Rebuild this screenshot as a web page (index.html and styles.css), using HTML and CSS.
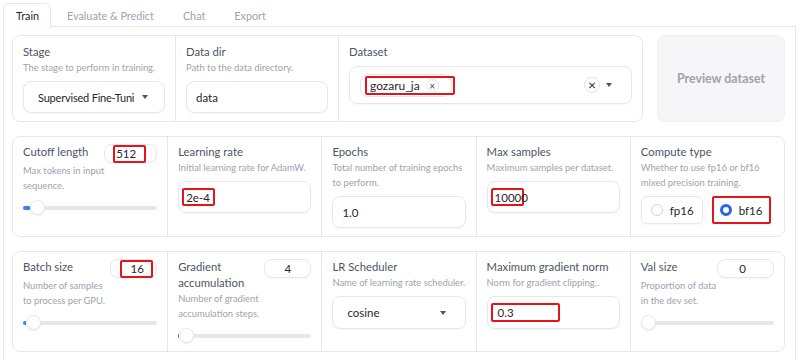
FILE: index.html
```html
<!DOCTYPE html>
<html lang="en">
<head>
	<meta charset="UTF-8">
	<title>Train</title>
	<link rel="stylesheet" href="styles.css">
</head>
<body>
	<div class="tabs">
		<div class="tab active">Train</div>
		<div class="tab">Evaluate &amp; Predict</div>
		<div class="tab">Chat</div>
		<div class="tab">Export</div>
	</div>

	<div class="panel">
		<!-- 数据 -->
		<div class="row-top">
			<div class="box box-data">
				<div class="cell">
					<div class="label">Stage</div>
					<div class="info">The stage to perform in training.</div>
					<div class="field select"><span class="value tight">Supervised Fine-Tuni</span><i class="caret"></i></div>
				</div>
				<div class="cell">
					<div class="label">Data dir</div>
					<div class="info">Path to the data directory.</div>
					<div class="field">data</div>
				</div>
				<div class="cell">
					<div class="label">Dataset</div>
					<div class="field multi">
						<span class="chip">
							<span class="mark mark-chip">gozaru_ja <i class="x small">&times;</i></span>
						</span>
						<span class="multi-end"><i class="x">&times;</i><i class="caret"></i></span>
					</div>
				</div>
			</div>
			<button class="preview">Preview dataset</button>
		</div>

		<!-- 训练参数 -->
		<div class="box grid5">
			<div class="cell">
				<div class="head">
					<div class="label">Cutoff length</div>
					<div class="num num-wide"><span class="mark mark-num">512</span></div>
				</div>
				<div class="info">Max tokens in input<br>sequence.</div>
				<div class="slider"><i class="fill" style="width: 7px"></i><i class="thumb"></i><i class="rest"></i></div>
			</div>
			<div class="cell">
				<div class="label">Learning rate</div>
				<div class="info">Initial learning rate for AdamW.</div>
				<div class="field field-marked"><span class="mark mark-val">2e-4</span></div>
			</div>
			<div class="cell">
				<div class="label">Epochs</div>
				<div class="info">Total number of training epochs<br>to perform.</div>
				<div class="field">1.0</div>
			</div>
			<div class="cell">
				<div class="label">Max samples</div>
				<div class="info">Maximum samples per dataset.</div>
				<div class="field field-marked"><span class="mark mark-val">10000</span></div>
			</div>
			<div class="cell">
				<div class="label">Compute type</div>
				<div class="info">Whether to use fp16 or bf16<br>mixed precision training.</div>
				<div class="radios">
					<label class="radio"><i class="dot"></i>fp16</label>
					<label class="radio checked"><i class="dot"></i>bf16</label>
				</div>
			</div>
		</div>

		<div class="box grid5">
			<div class="cell">
				<div class="head">
					<div class="label">Batch size</div>
					<div class="num"><span class="mark mark-num mark-center">16</span></div>
				</div>
				<div class="info">Number of samples<br>to process per GPU.</div>
				<div class="slider"><i class="fill" style="width: 3px"></i><i class="thumb"></i><i class="rest"></i></div>
			</div>
			<div class="cell">
				<div class="head">
					<div class="label">Gradient<br>accumulation</div>
					<div class="num">4</div>
				</div>
				<div class="info">Number of gradient<br>accumulation steps.</div>
				<div class="slider"><i class="fill" style="width: 1px"></i><i class="thumb"></i><i class="rest"></i></div>
			</div>
			<div class="cell">
				<div class="label">LR Scheduler</div>
				<div class="info">Name of learning rate scheduler.</div>
				<div class="field select tall"><span class="value">cosine</span><i class="caret"></i></div>
			</div>
			<div class="cell">
				<div class="label">Maximum gradient norm</div>
				<div class="info">Norm for gradient clipping..</div>
				<div class="field field-marked tall"><span class="mark mark-long">0.3</span></div>
			</div>
			<div class="cell">
				<div class="head">
					<div class="label">Val size</div>
					<div class="num num-val">0</div>
				</div>
				<div class="info">Proportion of data<br>in the dev set.</div>
				<div class="slider"><i class="thumb"></i><i class="rest"></i></div>
			</div>
		</div>
	</div>
</body>
</html>
```

FILE: styles.css
```css
body {
	margin: 0;
	width: 800px;
	font-family: Lato, 'Noto Sans', sans-serif;
	color: #27272a;
	background: #fff;
}

.tabs {
	display: flex;
	align-items: flex-start;
	height: 23px;
	padding: 3px 0 0 3px;
}

.tab {
	padding: 0 12px;
	line-height: 23px;
	font-size: 10.8px;
	color: #9ca3af;
	border: 1px solid transparent;
	border-bottom: none;
	border-radius: 6px 6px 0 0;
}

.tab + .tab {
	margin-left: 3px;
}

.tab.active {
	position: relative;
	z-index: 1;
	padding: 0 11px 0 12px;
	color: #27272a;
	background: #fff;
	border-color: #e5e7eb;
	height: 24px;
}

.panel {
	display: flex;
	flex-direction: column;
	gap: 14px;
	margin: 0 4px 0 3px;
	padding: 8px 10px 8px 8px;
	border: 1px solid #e5e7eb;
	border-bottom: none;
}

.row-top {
	display: grid;
	grid-template-columns: 1fr 128px;
	gap: 14px;
}

.box {
	display: grid;
	border: 1px solid #e5e7eb;
	border-radius: 8px;
	background: #fff;
}

.box-data {
	grid-template-columns: 162px 163px 1fr;
}

.box-data .cell {
	padding-top: 8px;
}

.grid5 {
	grid-template-columns: repeat(5, 1fr);
}

.cell {
	padding: 7px 10px 8px;
	border-left: 1px solid #e5e7eb;
	min-width: 0;
}

.cell:first-child {
	border-left: none;
}

.label {
	font-size: 11.3px;
	line-height: 16px;
	color: #4b5563;
}

.info {
	font-size: 9.4px;
	line-height: 15px;
	color: #9ca3af;
	white-space: nowrap;
}

.head {
	display: flex;
	justify-content: space-between;
	align-items: flex-start;
	gap: 6px;
}

.num {
	flex: none;
	display: flex;
	align-items: center;
	justify-content: center;
	box-sizing: border-box;
	width: 47px;
	height: 19px;
	border: 1px solid #e5e7eb;
	border-radius: 8px;
	font-size: 11.5px;
	color: #27272a;
	box-shadow: 0 1px 2px rgba(0, 0, 0, 0.04);
}

.num-wide {
	width: 53px;
	justify-content: flex-start;
	padding-left: 8px;
}

.num-val {
	width: 57px;
	padding-right: 6px;
}

.field {
	display: flex;
	align-items: center;
	box-sizing: border-box;
	height: 32px;
	margin-top: 6px;
	padding: 0 9px;
	border: 1px solid #e5e7eb;
	border-radius: 8px;
	font-size: 11.5px;
	color: #27272a;
	box-shadow: 0 1px 2px rgba(0, 0, 0, 0.04);
}

.field.tall {
	height: 33px;
}

.field-marked {
	padding-left: 3px;
}

.select {
	justify-content: space-between;
	gap: 8px;
	padding: 0 19px 0 14px;
	white-space: nowrap;
}

.value.tight {
	font-size: 11px;
	letter-spacing: -0.2px;
}

.caret {
	flex: none;
	width: 0;
	height: 0;
	border-left: 3.5px solid transparent;
	border-right: 3.5px solid transparent;
	border-top: 4px solid #4b5563;
}

.multi {
	height: 38px;
	justify-content: space-between;
	padding: 0 19px 0 10px;
}

.chip {
	display: flex;
	align-items: center;
	box-sizing: border-box;
	height: 23px;
	padding: 0 4px;
	border: 1px solid #e5e7eb;
	border-radius: 8px;
}

.multi-end {
	display: flex;
	align-items: center;
	gap: 6px;
}

.x {
	display: inline-flex;
	align-items: center;
	justify-content: center;
	box-sizing: border-box;
	width: 16px;
	height: 16px;
	border: 1px solid #e5e7eb;
	border-radius: 50%;
	font-style: normal;
	font-size: 14px;
	line-height: 1;
	color: #27272a;
}

.x.small {
	width: 13px;
	height: 13px;
	margin-left: 6px;
	font-size: 11px;
	color: #4b5563;
}

/* 红框标注 */
.mark {
	display: inline-flex;
	align-items: center;
	box-sizing: border-box;
	border: 2px solid #e5141b;
	border-radius: 2px;
	white-space: nowrap;
}

.mark-chip {
	height: 19px;
	margin-right: -8px;
	padding: 0 14px 0 3px;
	font-size: 12px;
}

.mark-num {
	width: 33px;
	height: 18px;
	padding-left: 1px;
}

.mark-center {
	justify-content: center;
	margin-left: 6px;
}

.mark-val {
	width: 33px;
	height: 18px;
	padding-left: 2px;
}

.mark-long {
	width: 69px;
	height: 19px;
	padding-left: 5px;
}

.slider {
	display: flex;
	align-items: center;
	height: 15px;
	margin-top: 7px;
}

.slider i {
	display: block;
	flex: none;
}

.fill {
	height: 4px;
	background: #3b82f6;
	border-radius: 2px 0 0 2px;
}

.thumb {
	box-sizing: border-box;
	width: 15px;
	height: 15px;
	border: 1px solid #e5e7eb;
	border-radius: 50%;
	background: #fff;
	box-shadow: 0 1px 2px rgba(0, 0, 0, 0.08);
}

.slider .rest {
	flex: 1;
	height: 4px;
	margin-left: -1px;
	background: #e5e7eb;
	border-radius: 0 2px 2px 0;
}

.radios {
	display: flex;
	gap: 9px;
	margin-top: 6px;
}

.radio {
	display: inline-flex;
	align-items: center;
	gap: 7px;
	box-sizing: border-box;
	height: 28px;
	padding: 0 8px 0 9px;
	border: 1px solid #e5e7eb;
	border-radius: 6px;
	font-size: 11.5px;
	color: #27272a;
	box-shadow: 0 1px 2px rgba(0, 0, 0, 0.04);
}

.dot {
	box-sizing: border-box;
	width: 12px;
	height: 12px;
	border: 1px solid #d1d5db;
	border-radius: 50%;
	background: #fff;
}

.radio.checked {
	border: 2px solid #e5141b;
	border-radius: 2px;
	padding: 0 7px 0 6px;
}

.radio.checked .dot {
	border: 3.5px solid #2563eb;
}

.preview {
	border: 1px solid #f0f0f2;
	border-radius: 8px;
	background: #f6f6f8;
	font-family: inherit;
	font-size: 12.4px;
	font-weight: 700;
	color: #a1a1aa;
}
```
